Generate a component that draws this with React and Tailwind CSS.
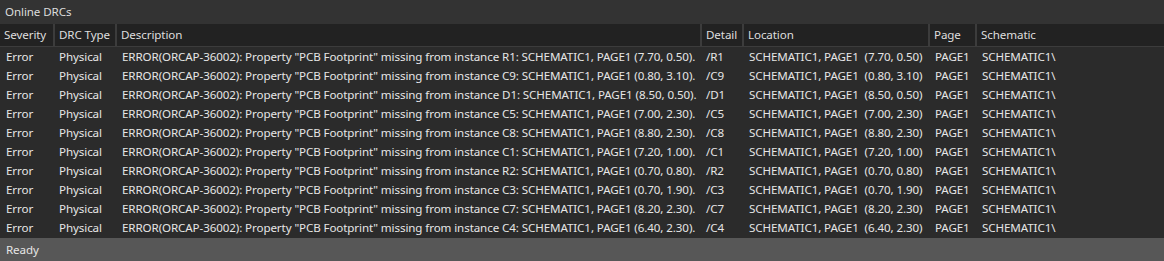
import React from "react";

const rows = [
  ["R1", "7.70, 0.50"],
  ["C9", "0.80, 3.10"],
  ["D1", "8.50, 0.50"],
  ["C5", "7.00, 2.30"],
  ["C8", "8.80, 2.30"],
  ["C1", "7.20, 1.00"],
  ["R2", "0.70, 0.80"],
  ["C3", "0.70, 1.90"],
  ["C7", "8.20, 2.30"],
  ["C4", "6.40, 2.30"],
];

const cols = [
  { name: "Severity", w: "w-[53px]" },
  { name: "DRC Type", w: "w-[60px]" },
  { name: "Description", w: "w-[583px]" },
  { name: "Detail", w: "w-[40px]" },
  { name: "Location", w: "w-[184px]" },
  { name: "Page", w: "w-[45px]" },
  { name: "Schematic", w: "flex-1" },
];

export default function App() {
  return (
    <div
      className="w-[1164px] h-[261px] flex flex-col bg-[#2b2b2b] text-[#e6e6e6] text-[11.6px] tracking-[-0.1px] overflow-hidden"
      style={{ fontFamily: '"Noto Sans", "Open Sans", sans-serif' }}
    >
      <div className="h-[24px] bg-[#333333] flex items-center pl-[5px] pb-[1px] text-[#dcdcdc]">
        Online DRCs
      </div>
      <div className="h-[23px] flex gap-[2px] bg-[#3c3c3c] pb-[1px]">
        {cols.map((c) => (
          <div
            key={c.name}
            className={`${c.w} bg-[#222222] flex items-center pl-[4px] text-[#dedede] overflow-hidden whitespace-nowrap`}
          >
            {c.name}
          </div>
        ))}
      </div>
      <div className="flex-1 flex flex-col">
        {rows.map(([ref, coord]) => (
          <div key={ref} className="h-[19px] flex items-center whitespace-nowrap">
            <div className="w-[55px] pl-[6px] overflow-hidden">Error</div>
            <div className="w-[62px] pl-[4px] overflow-hidden">Physical</div>
            <div className="w-[585px] pl-[5px] overflow-hidden">
              ERROR(ORCAP-36002): Property "PCB Footprint" missing from instance {ref}: SCHEMATIC1, PAGE1 ({coord}).
            </div>
            <div className="w-[42px] pl-[4px] overflow-hidden">/{ref}</div>
            <div className="w-[186px] pl-[5px] overflow-hidden">
              SCHEMATIC1, PAGE1&nbsp;&nbsp;({coord})
            </div>
            <div className="w-[47px] pl-[5px] overflow-hidden">PAGE1</div>
            <div className="flex-1 pl-[5px] overflow-hidden">SCHEMATIC1\</div>
          </div>
        ))}
      </div>
      <div className="h-[23px] bg-[#575757] flex items-center pl-[6px] text-[#e6e6e6]">
        Ready
      </div>
    </div>
  );
}
